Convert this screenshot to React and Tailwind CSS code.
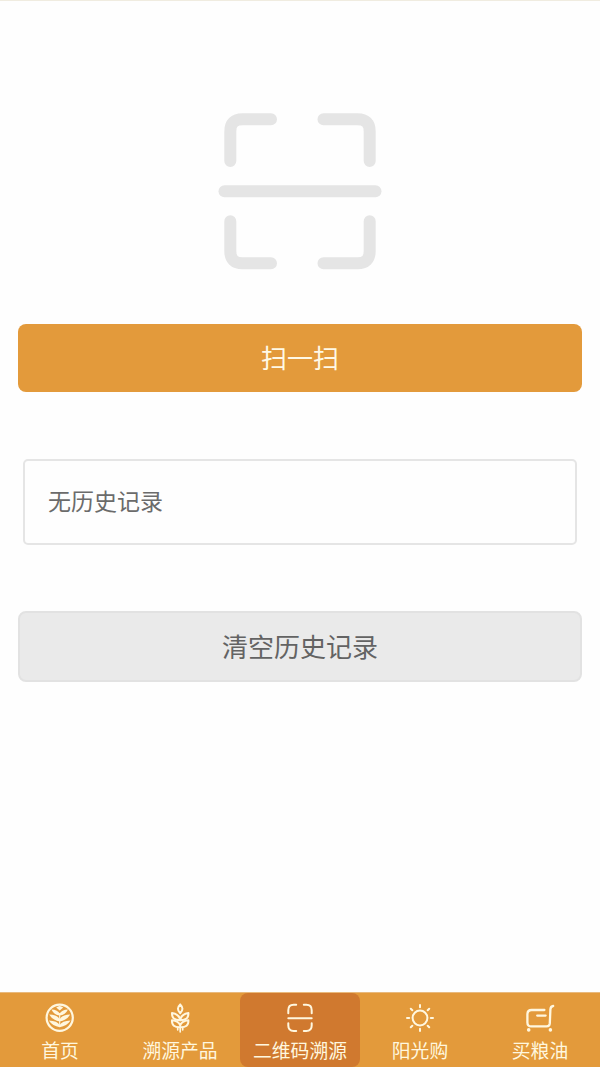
import { useState } from "react";

const ScanIcon = ({ className }) => (
  <svg
    viewBox="0 0 164 160"
    className={className}
    fill="none"
    stroke="currentColor"
    strokeWidth="12"
    strokeLinecap="round"
  >
    <path d="M12.3 49V19.5Q12.3 7.3 24.5 7.3H53" />
    <path d="M105.5 7.3H139.5Q151.7 7.3 151.7 19.5V49" />
    <path d="M6.5 79.2H157.5" />
    <path d="M12.3 109.3V139Q12.3 151.2 24.5 151.2H53" />
    <path d="M105.5 151.2H139.5Q151.7 151.2 151.7 139V109.3" />
  </svg>
);

const HomeIcon = () => (
  <svg viewBox="0 0 30 30" className="size-[30px]" fill="none" stroke="currentColor">
    <circle cx="14.7" cy="14.7" r="13.1" strokeWidth="2.2" />
    {/* Leaves */}
    <g fill="currentColor" stroke="none">
      <path d="M14.7 7.4L11.2 4.6Q13.2 3 14.7 3Q16.2 3 18.2 4.6Z" />
      <path d="M14.7 12.6Q9 11.6 6.4 6.4Q12.8 6.6 14.7 10.6Q16.6 6.6 23 6.4Q20.4 11.6 14.7 12.6Z" />
      <path d="M14.7 18.4Q7.6 17.4 4.2 11.6Q12.4 12 14.7 16.2Q17 12 25.2 11.6Q21.8 17.4 14.7 18.4Z" />
      <path d="M14.7 24.2Q7.6 23.2 3.8 17.6Q12.4 18 14.7 22Q17 18 25.6 17.6Q21.8 23.2 14.7 24.2Z" />
    </g>
    <path d="M14.7 10V24" strokeWidth="1.1" />
  </svg>
);

const WheatIcon = () => (
  <svg
    viewBox="0 0 30 30"
    className="size-[30px]"
    fill="none"
    stroke="currentColor"
    strokeWidth="2"
    strokeLinejoin="round"
    strokeLinecap="round"
  >
    <path d="M15.2 1.4C12.2 4.2 12.2 7.4 15.2 10.2C18.2 7.4 18.2 4.2 15.2 1.4Z" />
    <path d="M15.2 17.2C14.8 13 11.2 10.8 7 10C6.6 14.8 9.6 17.4 15.2 17.2Z" />
    <path d="M15.2 17.2C15.6 13 19.2 10.8 23.4 10C23.8 14.8 20.8 17.4 15.2 17.2Z" />
    <path d="M7 17.2C6.6 22.2 9.6 24.4 15.2 24.2C20.8 24.4 23.8 22.2 23.4 17.2C19.4 17.6 16 19.6 15.2 22.6C14.4 19.6 11 17.6 7 17.2Z" />
    <path d="M15.2 24.5V28.8M12.7 25V26.8M17.7 25V26.8" strokeWidth="1.7" />
  </svg>
);

const SmallScanIcon = () => (
  <svg
    viewBox="0 0 30 30"
    className="size-[30px]"
    fill="none"
    stroke="currentColor"
    strokeWidth="2"
    strokeLinecap="round"
  >
    <path d="M3.3 10.2V7.2Q3.3 1.8 8.7 1.8H11.2" />
    <path d="M18.8 1.8H21.3Q26.7 1.8 26.7 7.2V10.2" />
    <path d="M3.3 15.2H26.7" />
    <path d="M3.3 20.2V22.6Q3.3 28 8.7 28H11.2" />
    <path d="M18.8 28H21.3Q26.7 28 26.7 22.6V20.2" />
  </svg>
);

const SunIcon = () => (
  <svg
    viewBox="0 0 30 30"
    className="size-[30px]"
    fill="none"
    stroke="currentColor"
    strokeWidth="2"
    strokeLinecap="round"
  >
    <circle cx="15" cy="15" r="7.4" />
    <path d="M15 2V4.2M15 25.8V28M2 15H4.2M25.8 15H28M5.8 5.8 7.3 7.3M22.7 22.7 24.2 24.2M5.8 24.2 7.3 22.7M22.7 7.3 24.2 5.8" />
  </svg>
);

const CartIcon = () => (
  <svg
    viewBox="0 0 30 30"
    className="size-[30px]"
    fill="none"
    stroke="currentColor"
    strokeWidth="2.3"
    strokeLinecap="round"
    strokeLinejoin="round"
  >
    <path d="M19.4 7H6.6Q2.6 7 2.4 11V19.4Q2.4 23.4 6.4 23.4H21.6Q24.6 23.4 24.8 20.4L25.4 6.4Q25.6 3.2 28.2 3" />
    <path d="M12.2 12.6H20.6" />
    <circle cx="3.7" cy="26.9" r="1.8" fill="currentColor" stroke="none" />
    <circle cx="25.4" cy="26.9" r="1.8" fill="currentColor" stroke="none" />
  </svg>
);

const TABS = [
  { id: "home", label: "首页", Icon: HomeIcon },
  { id: "products", label: "溯源产品", Icon: WheatIcon },
  { id: "scan", label: "二维码溯源", Icon: SmallScanIcon },
  { id: "sunshine", label: "阳光购", Icon: SunIcon },
  { id: "shop", label: "买粮油", Icon: CartIcon },
];

const TabBar = ({ active, onChange }) => (
  <nav className="grid h-[75px] grid-cols-5 border-t border-[#e9b97c] bg-[#e39a3b]">
    {TABS.map(({ id, label, Icon }) => (
      <button
        key={id}
        onClick={() => onChange(id)}
        className={`flex flex-col items-center pt-2.5 text-[#fff7df] ${
          active === id ? "rounded-lg bg-[#d0792f]" : ""
        }`}
      >
        <Icon />
        <span className="mt-1.5 text-[18.8px] leading-[26px] whitespace-nowrap">{label}</span>
      </button>
    ))}
  </nav>
);

const App = () => {
  const [activeTab, setActiveTab] = useState("scan");

  return (
    <div className="flex h-[1067px] w-[600px] flex-col border-t border-[#f0ece0] bg-[#fefefe] font-['Roboto','Noto_Sans_CJK_SC',sans-serif]">
      <main className="flex flex-1 flex-col px-[18px]">
        <ScanIcon className="mx-auto mt-[111px] h-[160px] w-[164px] text-[#e5e5e5]" />

        <button className="mt-[52px] h-[68px] rounded-lg bg-[#e39a3b] pt-0.5 text-[26px] leading-none text-[#fff9e6]">
          扫一扫
        </button>

        {/* History */}
        <div className="mx-[5px] mt-[67px] flex h-[86px] items-center rounded-[5px] border-2 border-[#e5e5e5] px-[23px] pt-px text-[23px] leading-none text-[#6b6b6b]">
          无历史记录
        </div>

        <button className="mt-[66px] h-[71px] rounded-lg border-2 border-[#e2e2e2] bg-[#eaeaea] pt-0.5 text-[26px] leading-none text-[#636363]">
          清空历史记录
        </button>
      </main>

      <TabBar active={activeTab} onChange={setActiveTab} />
    </div>
  );
};

export default App;
